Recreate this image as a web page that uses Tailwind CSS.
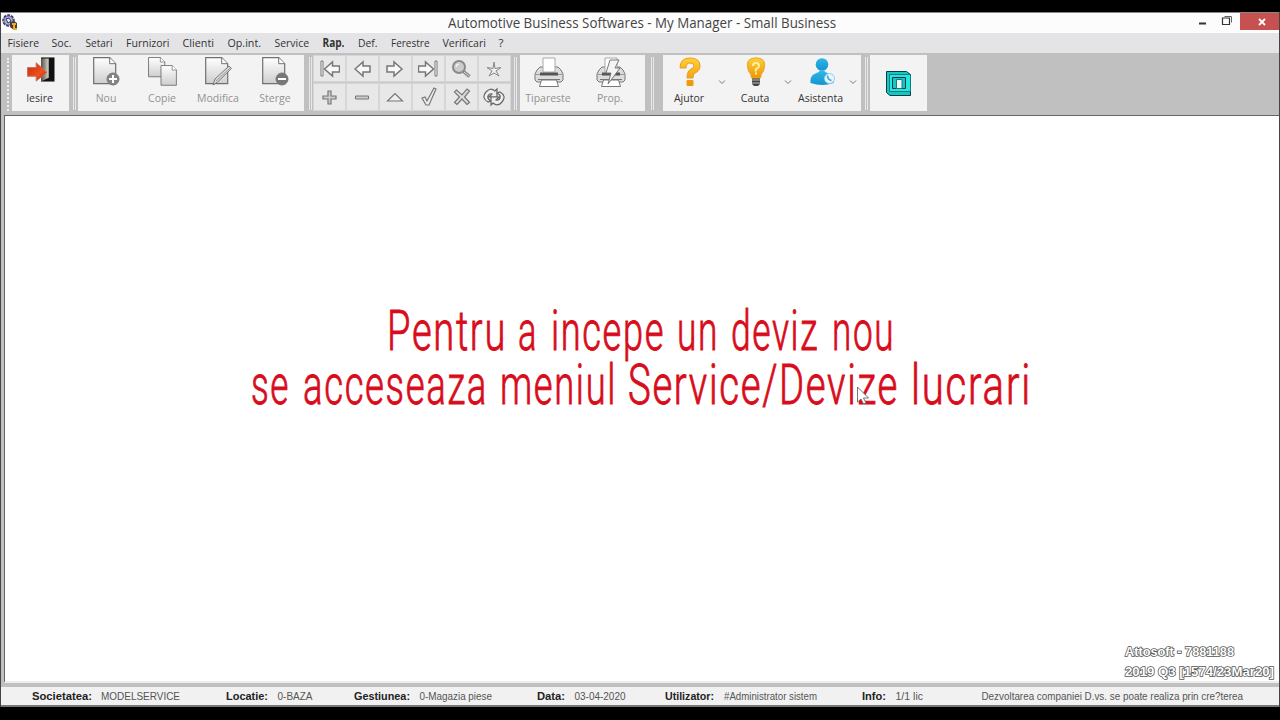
<!DOCTYPE html>
<html lang="ro">
<head>
    <meta charset="UTF-8">
    <meta name="viewport" content="width=device-width, initial-scale=1.0">
    <title>Automotive Business Softwares - My Manager - Small Business</title>
    <script src="https://cdn.jsdelivr.net/npm/@tailwindcss/browser@4"></script>
</head>
<body class="w-[1280px] h-[720px] overflow-hidden bg-black font-['Open_Sans','Noto_Sans',sans-serif] text-[#333]">
    <!-- Shared icon shapes -->
    <svg width="0" height="0" class="absolute">
        <defs>
            <linearGradient id="paper" x1="0" y1="0" x2="0" y2="1"><stop offset="0" stop-color="#fff"/><stop offset="1" stop-color="#cecece"/></linearGradient>
            <linearGradient id="red" x1="0" y1="0" x2="1" y2="1"><stop offset="0" stop-color="#c52a10"/><stop offset=".6" stop-color="#f0501c"/><stop offset="1" stop-color="#b82008"/></linearGradient>
            <linearGradient id="door" x1="0" y1="0" x2="1" y2="0"><stop offset="0" stop-color="#54504a"/><stop offset="1" stop-color="#d8d4c8"/></linearGradient>
            <linearGradient id="gold" x1="0" y1="0" x2="0" y2="1"><stop offset="0" stop-color="#ffd03a"/><stop offset="1" stop-color="#ee9408"/></linearGradient>
            <linearGradient id="sky" x1="0" y1="0" x2="0" y2="1"><stop offset="0" stop-color="#30b5e8"/><stop offset="1" stop-color="#1694d0"/></linearGradient>
            <g id="page">
                <path d="M.7.7h16l6 6v20H.7z" fill="url(#paper)" stroke="#707070" stroke-width="1.2"/>
                <path d="M16.700.7v6h6" fill="#fff" stroke="#707070"/>
            </g>
            <g id="printer">
                <path d="M3 13l3-3h18l3 3 2 4v6l-2 2H3l-2-2v-6z" fill="#dcdcdc" stroke="#777"/>
                <path d="M9 1h12v14H9z" fill="#fff" stroke="#aaa"/>
                <path d="M6 15.500h18v3H6z" fill="#555"/>
                <path d="M2 17.500h4m18 0h4" stroke="#999"/>
                <path d="M7.500 23h15l2 6.500h-19z" fill="#fff" stroke="#777"/>
                <path d="M4 22.500h22" stroke="#777"/>
            </g>
            <g id="left"><path d="M1 8l8-7v4h7v6H9v4z" fill="#f8f8f8" stroke="#777" stroke-width="1.500"/></g>
        </defs>
    </svg>

    <div class="mt-3 h-[695px] flex flex-col bg-[#c0c0c0] border-x border-[#444]">
        <!-- Title bar -->
        <div class="h-[21px] shrink-0 flex bg-[#fcfcfc] border-t border-[#888]">
            <svg class="mt-px ml-px shrink-0" width="17" height="17" viewBox="0 0 17 17">
                <circle cx="6.500" cy="6.500" r="4.700" fill="#c7c8e8" stroke="#34345f" stroke-width="3" stroke-dasharray="2.600 .8"/>
                <circle cx="6.500" cy="6.500" r="4.500" fill="#aaaed6" stroke="#6a6aac"/>
                <path d="M4 5l3-1 2 3-3 2z" fill="#eef" stroke="#335"/>
                <path d="M8 8l4-1 3 2v6l-3 1-4-3z" fill="#4a3a3a"/>
                <path d="M12 9v6M10 10h4m-3 5h4" stroke="#e9ad28" stroke-width="2"/>
            </svg>
            <div class="w-[429px] shrink-0"></div>
            <svg class="shrink-0 overflow-visible" width="392" height="20"><text x="0" y="15" font-size="14" fill="#444" textLength="388" lengthAdjust="spacingAndGlyphs">Automotive Business Softwares - My Manager - Small Business</text></svg>
            <svg class="ml-auto shrink-0" width="42" height="20" viewBox="0 0 42 20" fill="none" stroke="#333">
                <path d="M1 10.500h7" stroke-width="2"/>
                <path d="M24.500 5h7v6.500h-7zM24 5h8" stroke-width="1.200"/><path d="M26.500 3.500h7v6" stroke="#666"/>
            </svg>
            <div class="w-[39px] h-[17px] bg-[#c75050] shrink-0 flex justify-center items-center">
                <svg class="ml-1" width="8" height="8" viewBox="0 0 8 8"><path d="M1 1l6 6M7 1l-6 6" stroke="#fff" stroke-width="1.800"/></svg>
            </div>
        </div>

        <!-- Menu -->
        <svg class="h-5 shrink-0 bg-[#e4e4e6]" width="1278" height="20" font-size="11.500" fill="#333">
            <text x="6.500" y="14" textLength="31.500" lengthAdjust="spacingAndGlyphs">Fisiere</text>
            <text x="50.500" y="14" textLength="20" lengthAdjust="spacingAndGlyphs">Soc.</text>
            <text x="84.500" y="14" textLength="27" lengthAdjust="spacingAndGlyphs">Setari</text>
            <text x="125" y="14" textLength="43.500" lengthAdjust="spacingAndGlyphs">Furnizori</text>
            <text x="181.500" y="14" textLength="31.500" lengthAdjust="spacingAndGlyphs">Clienti</text>
            <text x="226.500" y="14" textLength="33.500" lengthAdjust="spacingAndGlyphs">Op.int.</text>
            <text x="273.500" y="14" textLength="34.500" lengthAdjust="spacingAndGlyphs">Service</text>
            <text x="321.500" y="14" font-weight="700" textLength="22" lengthAdjust="spacingAndGlyphs">Rap.</text>
            <text x="357" y="14" textLength="19.500" lengthAdjust="spacingAndGlyphs">Def.</text>
            <text x="390" y="14" textLength="38.500" lengthAdjust="spacingAndGlyphs">Ferestre</text>
            <text x="441.500" y="14" textLength="43.500" lengthAdjust="spacingAndGlyphs">Verificari</text>
            <text x="497.500" y="14">?</text>
        </svg>

        <!-- Toolbar -->
        <div class="h-[62px] shrink-0 flex pt-[2px] text-[10.500px] leading-[14px]">
            <div class="ml-[6px] mr-[2px] w-[3px] h-[53px] mt-[3px] border-l-2 border-dotted border-[#eee]"></div>
            <div class="w-[57px] h-14 bg-[#f3f3f3] flex flex-col items-center">
                <svg class="mt-px" width="30" height="27" viewBox="0 0 30 28">
                    <path d="M15 1.500h14v25H15z" fill="#111"/><path d="M15 2.500h8v20l-8 4z" fill="url(#door)"/>
                    <path d="M1 12h9V7l11 10-11 9v-5H1z" fill="url(#red)" stroke="#c8705a"/>
                </svg>
                <span class="mt-2 mr-0.5">Iesire</span>
            </div>
            <div class="ml-[4px] mr-[2px] w-[3px] h-[53px] mt-[2px] border-x border-x-[#e8e8e8]"></div>
            <div class="w-[226px] h-14 bg-[#f3f3f3] grid grid-cols-[56px_56px_57px_57px] text-center text-[#929292]">
                <div class="flex flex-col items-center"><svg class="mt-0.5 ml-0.5" width="28" height="30" viewBox="0 0 28 30"><use href="#page"/><circle cx="20" cy="22" r="6" fill="#858585" stroke="#777"/><path d="M16 22h8M20 18v8" stroke="#fff" stroke-width="2"/></svg><span class="mt-1">Nou</span></div>
                <div class="flex flex-col items-center"><svg class="mt-0.5 ml-0.5" width="30" height="30" viewBox="0 0 30 30"><use href="#page" transform="scale(.74)"/><use href="#page" transform="translate(12.500 8) scale(.7 .76)"/></svg><span class="mt-1">Copie</span></div>
                <div class="flex flex-col items-center"><svg class="mt-0.5" width="28" height="30" viewBox="0 0 28 30"><use href="#page"/><path d="M8 28l2-6 14-13 2.500 2.500-14 13.500z" fill="#ddd" stroke="#777"/><path d="M11 24l14-13" stroke="#999"/></svg><span class="mt-1 mr-px">Modifica</span></div>
                <div class="flex flex-col items-center"><svg class="mt-0.5" width="28" height="30" viewBox="0 0 28 30"><use href="#page"/><circle cx="20" cy="22" r="6" fill="#777" stroke="#777"/><path d="M16 22h8" stroke="#fff" stroke-width="2"/></svg><span class="mt-1 mr-px">Sterge</span></div>
            </div>
            <div class="ml-[5px] mr-px w-[3px] h-[53px] mt-[2px] border-x border-x-[#e8e8e8]"></div>
            <!-- Record navigation -->
            <div class="w-[198px] h-14 grid grid-cols-6 grid-rows-[27px_28px] gap-y-px bg-[#c9c9c9]">
                <div class="bg-[#e8e8e8] border border-[#d6d6d6] flex items-center justify-center"><svg width="20" height="18" viewBox="0 0 20 18"><path d="M1 1h2v15H1z" fill="#fff" stroke="#777"/><use href="#left" x="3.500" y="1"/></svg></div>
                <div class="bg-[#e8e8e8] border border-[#d6d6d6] flex items-center justify-center"><svg width="18" height="18" viewBox="0 0 18 18"><use href="#left" y="1"/></svg></div>
                <div class="bg-[#e8e8e8] border border-[#d6d6d6] flex items-center justify-center"><svg class="mr-0.5" width="18" height="18" viewBox="0 0 18 18"><use href="#left" transform="translate(17 1) scale(-1 1)"/></svg></div>
                <div class="bg-[#e8e8e8] border border-[#d6d6d6] flex items-center justify-center"><svg class="mr-0.5" width="20" height="18" viewBox="0 0 20 18"><path d="M17 1h2v15h-2z" fill="#fff" stroke="#777"/><use href="#left" transform="translate(16.500 1) scale(-1 1)"/></svg></div>
                <div class="bg-[#e8e8e8] border border-[#d6d6d6] flex items-center justify-center"><svg width="21" height="20" viewBox="0 0 21 20"><circle cx="8" cy="8" r="6" fill="#ccc" stroke="#8a8a8a" stroke-width="2"/><path d="M5 8q0-3 3-3" fill="none" stroke="#fff"/><path d="M12.500 12.500l6 5" stroke="#888" stroke-width="3.500"/><path d="M13 13l5 4" stroke="#ddd"/></svg></div>
                <div class="bg-[#e8e8e8] border border-[#d6d6d6] flex items-center justify-center"><svg class="mr-0.5" width="18" height="18" viewBox="0 0 18 18"><path d="M9 2l1 6.500 6-1-5 3.500 3 5-5-3-5 3 3-5-5-3.500 6 1z" fill="#eee" stroke="#888"/></svg></div>
                <div class="bg-[#e8e8e8] border border-[#d6d6d6] flex items-center justify-center"><svg class="mr-px" width="15" height="15" viewBox="0 0 15 15"><path d="M6 1h3v5h5v3H9v5H6V9H1V6h5z" fill="#ccc" stroke="#777" stroke-width="1.200"/></svg></div>
                <div class="bg-[#e8e8e8] border border-[#d6d6d6] flex items-center justify-center"><svg class="mr-0.5" width="14" height="5" viewBox="0 0 14 5"><path d="M.5 1h13v3H.5z" fill="#ccc" stroke="#777"/></svg></div>
                <div class="bg-[#e8e8e8] border border-[#d6d6d6] flex items-center justify-center"><svg class="mr-0.5" width="18" height="10" viewBox="0 0 18 10"><path d="M1.500 9L9 1.500 16.500 9z" fill="#eee" stroke="#777" stroke-width="1.200"/></svg></div>
                <div class="bg-[#e8e8e8] border border-[#d6d6d6] flex items-center justify-center"><svg width="18" height="20" viewBox="0 0 18 20"><path d="M2 11l3-1 2 4 7-13 2 1-7 16H6z" fill="#eee" stroke="#777" stroke-width="1.200"/></svg></div>
                <div class="bg-[#e8e8e8] border border-[#d6d6d6] flex items-center justify-center"><svg width="18" height="18" viewBox="0 0 18 18"><path d="M1.500 4l2-2L9 7l5-6 2.500 2-5 6 5 5.500-2.500 2L9 11l-5 5.500-2.500-2L6.500 9z" fill="#ddd" stroke="#777" stroke-width="1.200"/></svg></div>
                <div class="bg-[#e8e8e8] border border-[#d6d6d6] flex items-center justify-center"><svg class="mr-px" width="22" height="20" viewBox="0 0 22 20"><path id="turn" d="M5 15Q-2 11 3 5q4-5 9-1l2-2v8H6l3-3q-3-1-4 2-1 3 3 5z" fill="#eee" stroke="#666" stroke-width="1.200"/><use href="#turn" transform="rotate(180 11 10)"/></svg></div>
            </div>
            <div class="ml-[3px] mr-[3px] w-[3px] h-[53px] mt-[2px] border-x border-x-[#e8e8e8]"></div>
            <div class="w-[125px] h-14 bg-[#f3f3f3] flex text-[#929292]">
                <div class="w-[56px] flex flex-col items-center"><svg class="mt-0.5 ml-0.5" width="30" height="30" viewBox="0 0 30 30"><use href="#printer"/></svg><span class="mt-1">Tipareste</span></div>
                <div class="w-[69px] flex flex-col items-center"><svg class="mt-0.5 ml-px" width="30" height="30" viewBox="0 0 30 30"><use href="#printer"/><path d="M14 3h9l-4 8h5L12 27l3-11h-5z" fill="#f4f4f4" stroke="#777"/></svg><span class="mt-1 mr-px">Prop.</span></div>
            </div>
            <div class="ml-[6px] mr-[9px] w-[3px] h-[53px] mt-[2px] border-x border-x-[#e8e8e8]"></div>
            <div class="w-[198px] h-14 bg-[#f3f3f3] flex">
                <div class="w-[52px] flex flex-col items-center"><svg class="mt-0.5 ml-0.5" width="26" height="30" viewBox="0 0 26 30"><path d="M3 11q0-10 10-10t10 8q0 5-5 7-2 1-2 5h-6q0-7 4-9 3-1 3-3 0-3-4-3-4 0-4 5zM10 23.500h6v5h-6z" fill="url(#gold)" stroke="#ec9c18"/></svg><span class="mt-1">Ajutor</span></div>
                <svg class="mt-6 shrink-0" width="14" height="8" viewBox="0 0 14 8"><path d="M4 1.500l3 3 3-3" fill="none" stroke="#777"/></svg>
                <div class="w-[52px] flex flex-col items-center"><svg class="mt-0.5 ml-0.5" width="24" height="30" viewBox="0 0 24 30"><path d="M8 20h8v7l-2 2h-4l-2-2z" fill="#444"/><path d="M8 23h8m-8 3h8" stroke="#bbb"/><path d="M7.500 21q0-4-3-7Q0 1 12 .8 24 1 19.500 14q-3 3-3 7z" fill="url(#gold)" stroke="#e7a72a"/><path d="M9 9q0-3 3-3t3 2.500q0 2-2 3t-1 3m0 1v2" fill="none" stroke="#fff0a0" stroke-width="2"/></svg><span class="mt-1">Cauta</span></div>
                <svg class="mt-6 shrink-0" width="14" height="8" viewBox="0 0 14 8"><path d="M4 1.500l3 3 3-3" fill="none" stroke="#777"/></svg>
                <div class="w-[51px] flex flex-col items-center"><svg class="mt-0.5 ml-1" width="26" height="30" viewBox="0 0 26 30"><circle cx="12" cy="7.500" r="6.300" fill="url(#sky)"/><path d="M.5 26q-1-8 6-10 3-1 3-2h5q0 1 3 2 7 2 6 10-11 4-23 0z" fill="url(#sky)"/><circle cx="19.500" cy="21.500" r="5" fill="#e6f5fc" stroke="#90cce8"/><path d="M17.500 18.500q0 4 4 5" fill="none" stroke="#3aa5d8" stroke-width="1.500"/></svg><span class="mt-1">Asistenta</span></div>
                <svg class="mt-6 shrink-0" width="14" height="8" viewBox="0 0 14 8"><path d="M4 1.500l3 3 3-3" fill="none" stroke="#777"/></svg>
            </div>
            <div class="ml-[4px] mr-[2px] w-[3px] h-[53px] mt-[2px] border-x border-x-[#e8e8e8]"></div>
            <div class="w-[57px] h-14 bg-[#f3f3f3] flex items-center justify-center">
                <svg width="25" height="25" viewBox="0 0 25 25" fill="#18c4c4" stroke="#0b3c40">
                    <path d="M.500.500h20l4 3v21H4l-3.500-3z"/>
                    <path d="M3.500 3.500h21v17h-21z" fill="#26e6e0" stroke="#0f8080"/>
                    <path d="M6.500 6.500h13v11h-13z"/>
                    <path d="M10.500 8.500h5.500v9h-5.500z" fill="#f0f8f8" stroke="#128080"/>
                </svg>
            </div>
        </div>

        <!-- Workspace -->
        <div class="h-[568px] shrink-0 ml-[3px] border-l border-t border-b-2 border-l-[#666] border-t-[#666] border-b-[#eee] bg-white">
            <svg class="block" width="1274" height="565" viewBox="5 116 1274 565">
                <g font-family="Roboto" font-weight="300" font-size="56" letter-spacing="2.500" fill="#d80d1c" stroke="#d80d1c" stroke-width=".9">
                    <text x="387" y="350" textLength="120" lengthAdjust="spacingAndGlyphs">Pentru</text>
                    <text x="518" y="350" textLength="20" lengthAdjust="spacingAndGlyphs">a</text>
                    <text x="551" y="350" textLength="114" lengthAdjust="spacingAndGlyphs">incepe</text>
                    <text x="677" y="350" textLength="42" lengthAdjust="spacingAndGlyphs">un</text>
                    <text x="731" y="350" textLength="88" lengthAdjust="spacingAndGlyphs">deviz</text>
                    <text x="832" y="350" textLength="63" lengthAdjust="spacingAndGlyphs">nou</text>
                    <text x="251" y="403.500" textLength="39" lengthAdjust="spacingAndGlyphs">se</text>
                    <text x="303" y="403.500" textLength="185" lengthAdjust="spacingAndGlyphs">acceseaza</text>
                    <text x="500" y="403.500" textLength="117" lengthAdjust="spacingAndGlyphs">meniul</text>
                    <text x="628" y="403.500" textLength="271" lengthAdjust="spacingAndGlyphs">Service/Devize</text>
                    <text x="911" y="403.500" textLength="121" lengthAdjust="spacingAndGlyphs">lucrari</text>
                </g>
                <path d="M857.500 387v15l3.500-3 2.500 5 2.500-1-2.500-5h5z" fill="#fff" stroke="#666" stroke-width=".9"/>
                <g font-family="Liberation Sans" font-weight="700" font-size="13.500" fill="#fff" stroke="#555" stroke-width="1.600" paint-order="stroke">
                    <text x="1125" y="656" textLength="109" lengthAdjust="spacingAndGlyphs">Attosoft - 7881188</text>
                    <text x="1125" y="676" textLength="149" lengthAdjust="spacingAndGlyphs">2019 Q3 [1574/23Mar20]</text>
                </g>
            </svg>
        </div>

        <!-- Status bar -->
        <svg class="mt-[4px] h-[20px] shrink-0 bg-[#f1f1f1] border-b-2 border-[#777]" width="1278" height="20" viewBox="1 687 1278 18" font-family="Liberation Sans" font-size="11" fill="#555">
            <g font-weight="700" fill="#222">
                <text x="32" y="700" textLength="60" lengthAdjust="spacingAndGlyphs">Societatea:</text>
                <text x="226" y="700" textLength="42" lengthAdjust="spacingAndGlyphs">Locatie:</text>
                <text x="354" y="700" textLength="56" lengthAdjust="spacingAndGlyphs">Gestiunea:</text>
                <text x="537" y="700" textLength="28" lengthAdjust="spacingAndGlyphs">Data:</text>
                <text x="665" y="700" textLength="49" lengthAdjust="spacingAndGlyphs">Utilizator:</text>
                <text x="862" y="700" textLength="24" lengthAdjust="spacingAndGlyphs">Info:</text>
            </g>
            <text x="101" y="700" textLength="79" lengthAdjust="spacingAndGlyphs">MODELSERVICE</text>
            <text x="277.500" y="700" textLength="35" lengthAdjust="spacingAndGlyphs">0-BAZA</text>
            <text x="419.500" y="700" textLength="72.500" lengthAdjust="spacingAndGlyphs">0-Magazia piese</text>
            <text x="574.500" y="700" textLength="51" lengthAdjust="spacingAndGlyphs">03-04-2020</text>
            <text x="724" y="700" textLength="93" lengthAdjust="spacingAndGlyphs">#Administrator sistem</text>
            <text x="895.500" y="700" textLength="27.500" lengthAdjust="spacingAndGlyphs">1/1 lic</text>
            <text x="981.500" y="700" textLength="261.500" lengthAdjust="spacingAndGlyphs">Dezvoltarea companiei D.vs. se poate realiza prin cre?terea</text>
        </svg>
    </div>
</body>
</html>
